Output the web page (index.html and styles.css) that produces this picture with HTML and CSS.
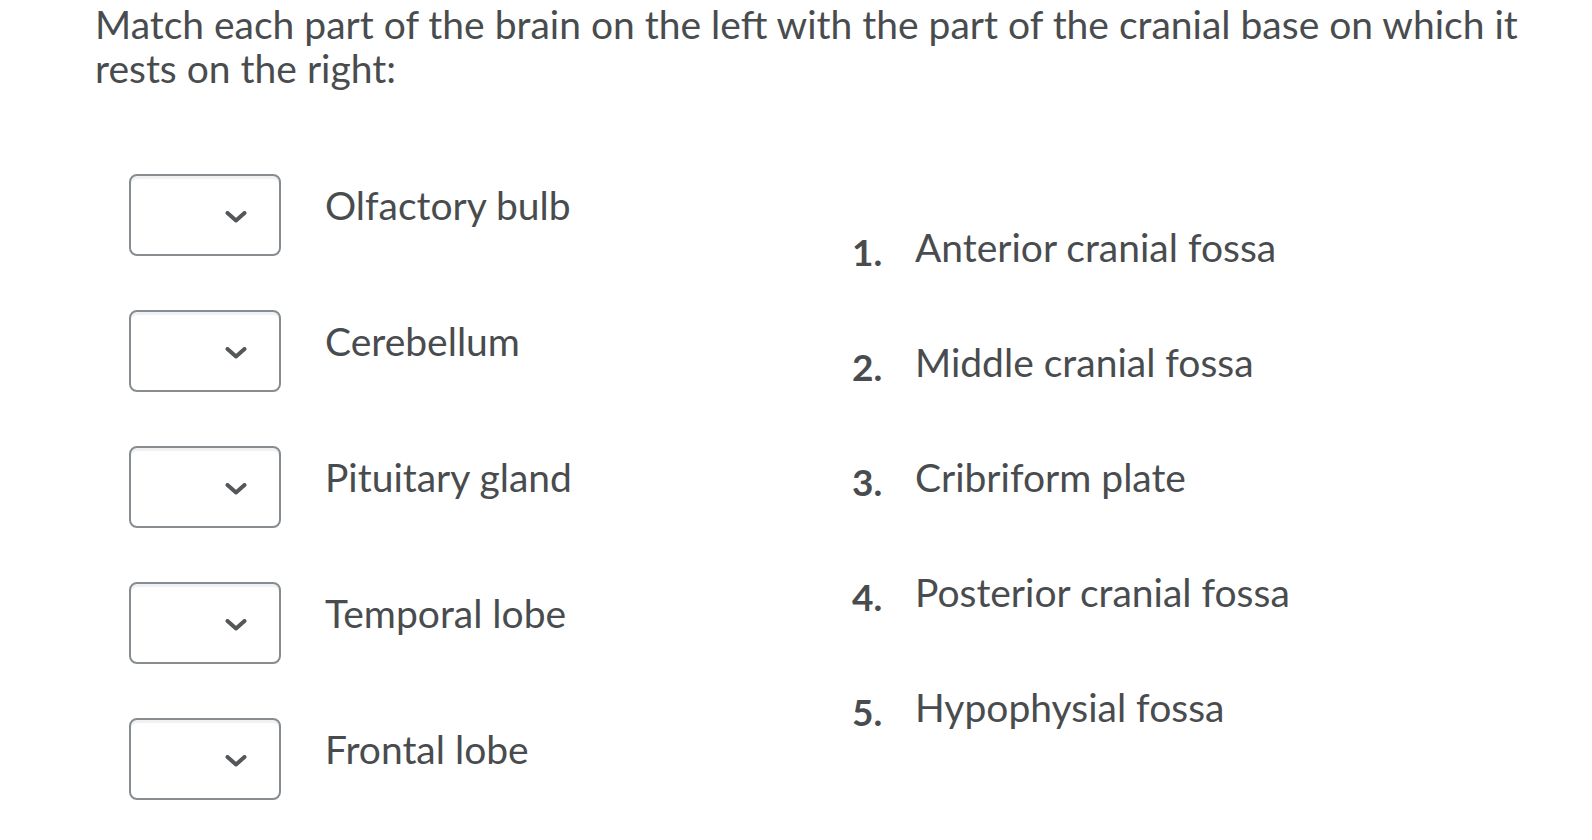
FILE: index.html
```html
<!DOCTYPE html>
<html lang="en">
<head>
  <meta charset="UTF-8">
  <meta name="viewport" content="width=device-width, initial-scale=1.0">
  <title>Matching Question</title>

  <!-- Styling for the matching question -->
  <link rel="stylesheet" href="styles.css">
</head>
<body>

  <div class="question">
    <!-- Question prompt -->
    <p class="prompt">Match each part of the brain on the left with the part of the cranial base on which it rests on the right:</p>

    <div class="matching">
      <!-- Items to match, each with an empty dropdown -->
      <div class="choices">
        <div class="choice-row">
          <div class="select-box">
            <svg class="chevron" width="22" height="12" viewBox="0 0 22 12"><polyline points="2.5,2 11,9.5 19.5,2" /></svg>
          </div>
          <span class="choice-label">Olfactory bulb</span>
        </div>
        <div class="choice-row">
          <div class="select-box">
            <svg class="chevron" width="22" height="12" viewBox="0 0 22 12"><polyline points="2.5,2 11,9.5 19.5,2" /></svg>
          </div>
          <span class="choice-label">Cerebellum</span>
        </div>
        <div class="choice-row">
          <div class="select-box">
            <svg class="chevron" width="22" height="12" viewBox="0 0 22 12"><polyline points="2.5,2 11,9.5 19.5,2" /></svg>
          </div>
          <span class="choice-label">Pituitary gland</span>
        </div>
        <div class="choice-row">
          <div class="select-box">
            <svg class="chevron" width="22" height="12" viewBox="0 0 22 12"><polyline points="2.5,2 11,9.5 19.5,2" /></svg>
          </div>
          <span class="choice-label">Temporal lobe</span>
        </div>
        <div class="choice-row">
          <div class="select-box">
            <svg class="chevron" width="22" height="12" viewBox="0 0 22 12"><polyline points="2.5,2 11,9.5 19.5,2" /></svg>
          </div>
          <span class="choice-label">Frontal lobe</span>
        </div>
      </div>

      <!-- Numbered answers -->
      <ol class="answers">
        <li><span class="num">1.</span>Anterior cranial fossa</li>
        <li><span class="num">2.</span>Middle cranial fossa</li>
        <li><span class="num">3.</span>Cribriform plate</li>
        <li><span class="num">4.</span>Posterior cranial fossa</li>
        <li><span class="num">5.</span>Hypophysial fossa</li>
      </ol>
    </div>
  </div>

</body>
</html>
```

FILE: styles.css
```css
/* General Body Styling */
body {
  font-family: 'Lato', 'Open Sans', sans-serif;
  margin: 0;
  padding: 0;
  background-color: #ffffff;
  color: #494c4e;
}

/* Question Container */
.question {
  padding: 2px 30px 0 95px;
}

.prompt {
  font-size: 39px;
  line-height: 44px;
  margin: 0;
}

/* Matching Area */
.matching {
  display: flex;
  align-items: flex-start;
  margin-top: 84px;
  padding-left: 34px;
}

.choices {
  width: 723px;
  display: flex;
  flex-direction: column;
  gap: 54px;
}

.choice-row {
  display: flex;
  align-items: flex-start;
  gap: 44px;
}

/* Dropdown */
.select-box {
  width: 152px;
  height: 82px;
  box-sizing: border-box;
  border: 2px solid #868c8f;
  border-radius: 8px;
  box-shadow: inset 0 3px 0 0 rgba(177, 185, 190, 0.2);
  display: flex;
  align-items: center;
  justify-content: flex-end;
  padding: 3px 32px 0 0;
}

.chevron polyline {
  fill: none;
  stroke: #53575a;
  stroke-width: 4;
  stroke-linecap: round;
  stroke-linejoin: round;
}

.choice-label {
  font-size: 39px;
  line-height: 47px;
  margin-top: 8px;
}

/* Answer List */
.answers {
  list-style: none;
  margin: 50px 0 0 0;
  padding: 0;
  display: flex;
  flex-direction: column;
  gap: 68px;
}

.answers li {
  font-size: 39px;
  line-height: 47px;
  height: 47px;
}

.answers .num {
  display: inline-block;
  width: 63px;
  font-size: 37px;
  line-height: 34px;
  font-weight: bold;
  vertical-align: -4px;
}
```
